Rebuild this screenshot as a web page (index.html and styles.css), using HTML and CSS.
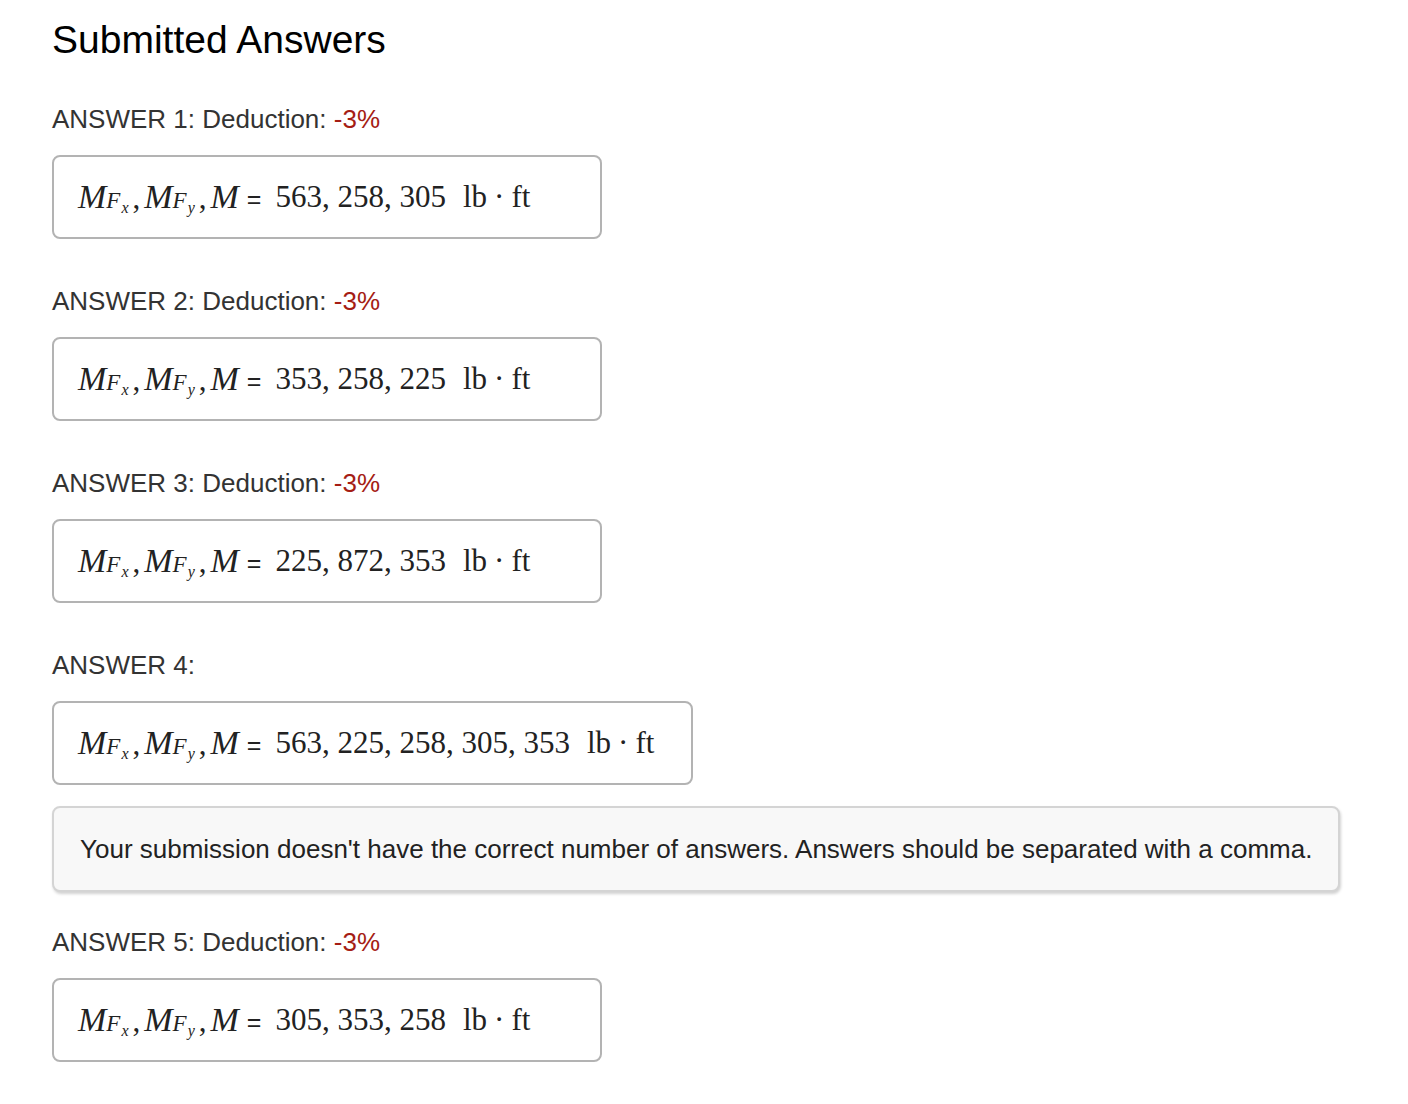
FILE: index.html
```html
<!DOCTYPE html>
<html>
<head>
<meta charset="utf-8">
<link rel="stylesheet" href="styles.css">
</head>
<body>
<main class="page">
  <h1 class="title">Submitted Answers</h1>

  <section class="answer">
    <div class="label">ANSWER 1: Deduction: <span class="ded">-3%</span></div>
    <div class="mathbox">
      <span class="lhs"><i class="mv">M</i><sub class="s1"><i>F</i><sub class="s2"><i>x</i></sub></sub><span class="cm">,</span><i class="mv">M</i><sub class="s1"><i>F</i><sub class="s2"><i>y</i></sub></sub><span class="cm">,</span><i class="mv">M</i></span><span class="eq">=</span><span class="val">563, 258, 305</span><span class="unit">lb<span class="dot">·</span>ft</span>
    </div>
  </section>

  <section class="answer">
    <div class="label">ANSWER 2: Deduction: <span class="ded">-3%</span></div>
    <div class="mathbox">
      <span class="lhs"><i class="mv">M</i><sub class="s1"><i>F</i><sub class="s2"><i>x</i></sub></sub><span class="cm">,</span><i class="mv">M</i><sub class="s1"><i>F</i><sub class="s2"><i>y</i></sub></sub><span class="cm">,</span><i class="mv">M</i></span><span class="eq">=</span><span class="val">353, 258, 225</span><span class="unit">lb<span class="dot">·</span>ft</span>
    </div>
  </section>

  <section class="answer">
    <div class="label">ANSWER 3: Deduction: <span class="ded">-3%</span></div>
    <div class="mathbox">
      <span class="lhs"><i class="mv">M</i><sub class="s1"><i>F</i><sub class="s2"><i>x</i></sub></sub><span class="cm">,</span><i class="mv">M</i><sub class="s1"><i>F</i><sub class="s2"><i>y</i></sub></sub><span class="cm">,</span><i class="mv">M</i></span><span class="eq">=</span><span class="val">225, 872, 353</span><span class="unit">lb<span class="dot">·</span>ft</span>
    </div>
  </section>

  <section class="answer with-feedback">
    <div class="label">ANSWER 4:</div>
    <div class="mathbox">
      <span class="lhs"><i class="mv">M</i><sub class="s1"><i>F</i><sub class="s2"><i>x</i></sub></sub><span class="cm">,</span><i class="mv">M</i><sub class="s1"><i>F</i><sub class="s2"><i>y</i></sub></sub><span class="cm">,</span><i class="mv">M</i></span><span class="eq">=</span><span class="val">563, 225, 258, 305, 353</span><span class="unit">lb<span class="dot">·</span>ft</span>
    </div>
    <div class="feedback">Your submission doesn't have the correct number of answers. Answers should be separated with a comma.</div>
  </section>

  <section class="answer">
    <div class="label">ANSWER 5: Deduction: <span class="ded">-3%</span></div>
    <div class="mathbox">
      <span class="lhs"><i class="mv">M</i><sub class="s1"><i>F</i><sub class="s2"><i>x</i></sub></sub><span class="cm">,</span><i class="mv">M</i><sub class="s1"><i>F</i><sub class="s2"><i>y</i></sub></sub><span class="cm">,</span><i class="mv">M</i></span><span class="eq">=</span><span class="val">305, 353, 258</span><span class="unit">lb<span class="dot">·</span>ft</span>
    </div>
  </section>
</main>
</body>
</html>
```

FILE: styles.css
```css
html, body {
  margin: 0;
  padding: 0;
  background: #ffffff;
}

body {
  font-family: "Liberation Sans", Arial, sans-serif;
  color: #222;
}

.page {
  padding: 18px 52px 40px 52px;
}

.title {
  margin: 0;
  font-size: 39px;
  line-height: 44px;
  font-weight: 400;
  color: #000;
}

.answer {
  display: flex;
  flex-direction: column;
  align-items: flex-start;
  margin-top: 39px;
}

.answer + .answer {
  margin-top: 44px;
}

.with-feedback + .answer {
  margin-top: 32px;
}

.label {
  font-size: 26px;
  line-height: 36px;
  color: #333;
}

.ded {
  color: #a51d14;
}

.mathbox {
  margin-top: 18px;
  box-sizing: border-box;
  min-width: 550px;
  height: 84px;
  padding: 0 37px 0 24px;
  border: 2px solid #b3b3b3;
  border-radius: 8px;
  display: flex;
  align-items: center;
  font-family: "Liberation Serif", "Times New Roman", serif;
  font-size: 31px;
  color: #222;
  white-space: nowrap;
}

.lhs {
  display: inline-flex;
  align-items: baseline;
}

.mv {
  font-style: italic;
  font-size: 34px;
}

.s1 {
  font-size: 23px;
  vertical-align: -6px;
  margin-left: 0;
}

.s1 i {
  font-style: italic;
}

.s2 {
  font-size: 16px;
  vertical-align: -5px;
  margin-left: 1px;
}

.cm {
  margin: 0 4px 0 4px;
}

.eq {
  font-family: "Liberation Sans", Arial, sans-serif;
  font-size: 25px;
  margin: 0 14px 0 8px;
  position: relative;
  top: 2px;
}

.val {
  margin-right: 17px;
}

.unit .dot {
  margin: 0 7px;
}

.feedback {
  margin-top: 21px;
  box-sizing: border-box;
  width: 1288px;
  height: 86px;
  padding: 0 10px 0 26px;
  display: flex;
  align-items: center;
  background: #f8f8f8;
  border: 2px solid #d4d4d4;
  border-radius: 8px;
  box-shadow: 1px 2px 3px rgba(0, 0, 0, 0.18);
  font-size: 26px;
  color: #222;
  white-space: nowrap;
}
```
